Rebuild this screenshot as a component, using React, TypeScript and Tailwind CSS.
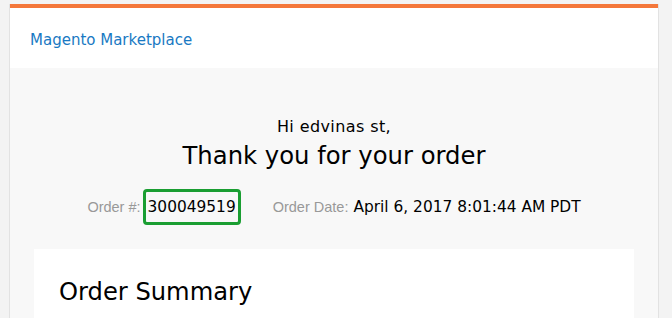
export default function App() {
  const verdana = "font-['DejaVu_Sans',Verdana,sans-serif]";
  const arial = "font-['Liberation_Sans',Arial,sans-serif]";

  return (
    <div className="min-h-[318px] bg-[#f3f3f3] pt-[4px] pl-[9px]">
      <div className="w-[650px] border-x border-[#e2e2e2]">
        <div className="h-[4px] bg-[#f4773a]" />
        <header className="h-[60px] bg-white px-[20px] pt-[23px]">
          <a className={`${verdana} block text-[15px] leading-[18px] text-[#1979c3]`}>Magento Marketplace</a>
        </header>
        <main className="bg-[#f8f8f8] px-[24px] pt-[49px] pb-[40px]">
          <div className={`${verdana} text-center text-black`}>
            <p className="text-[16px] leading-[20px] tracking-[0.4px]">Hi edvinas st,</p>
            <h1 className="mt-[5px] text-[24.3px] leading-[28px]">Thank you for your order</h1>
          </div>

          <div className="mt-[19px] flex items-baseline justify-center">
            <span className={`${arial} text-[14.5px] text-[#999]`}>Order #:</span>
            <span className={`${verdana} ml-[2px] rounded-[4px] border-[3px] border-[#1a9e32] px-[2px] text-[15.4px] leading-[30px] text-black`}>
              300049519
            </span>
            <span className={`${arial} ml-[32px] text-[14.5px] text-[#999]`}>Order Date:</span>
            <span className={`${verdana} ml-[5px] text-[15.4px] text-black`}>April 6, 2017 8:01:44 AM PDT</span>
          </div>

          <section className="mt-[24px] bg-white px-[25px] pt-[28px] pb-[20px]">
            <h2 className={`${verdana} text-[24.2px] leading-[30px] text-black`}>Order Summary</h2>
          </section>
        </main>
      </div>
    </div>
  );
}
